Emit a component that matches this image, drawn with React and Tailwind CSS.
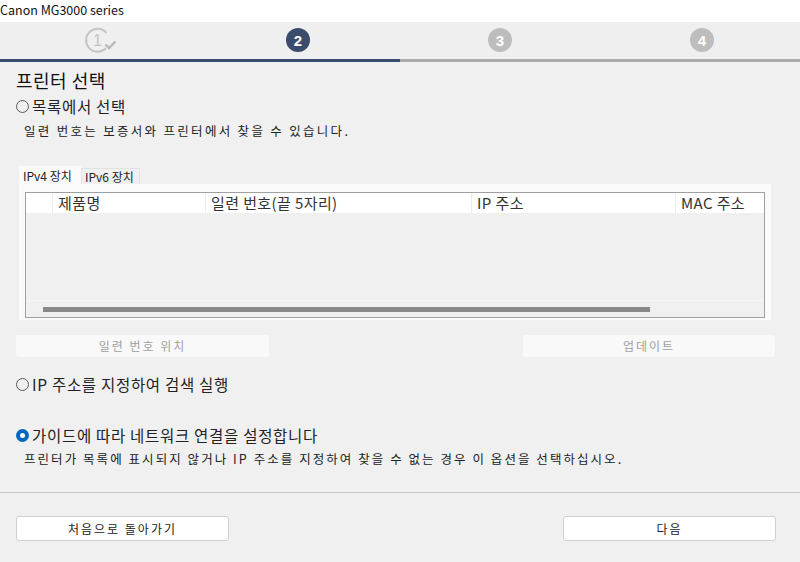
import React from 'react';

const font = { fontFamily: '"Noto Sans CJK KR", "Liberation Sans", sans-serif' };

const StepDone = () => (
  <svg width="34" height="26" viewBox="0 0 34 26">
    <path d="M23.5 17 A11.5 11.5 0 1 1 17.5 2.7" fill="none" stroke="#c4c4c4" strokeWidth="2" transform="rotate(25 12.5 13)" />
    <text x="12.5" y="19" textAnchor="middle" fontSize="16" fill="#c4c4c4" fontFamily="Liberation Sans, sans-serif">1</text>
    <path d="M20.5 17.5 L24 21 L30.5 14.5" fill="none" stroke="#b8b8b8" strokeWidth="2.4" />
  </svg>
);

const StepCircle = ({ n, active }) => (
  <div
    className={`w-6 h-6 rounded-full flex items-center justify-center text-white text-[15px] font-bold leading-none ${
      active ? 'bg-[#3a4b6b]' : 'bg-[#bdbdbd]'
    }`}
    style={{ fontFamily: '"Liberation Sans", sans-serif' }}
  >
    {n}
  </div>
);

const Radio = ({ checked }) =>
  checked ? (
    <span className="w-[13px] h-[13px] rounded-full bg-[#0067c0] flex items-center justify-center shrink-0">
      <span className="w-[5px] h-[5px] rounded-full bg-white" />
    </span>
  ) : (
    <span className="w-[13px] h-[13px] rounded-full border border-[#5c5c5c] bg-transparent shrink-0" />
  );

const RadioRow = ({ checked, label, className = '' }) => (
  <div className={`flex items-center gap-[3px] h-4 pl-4 ${className}`}>
    <Radio checked={checked} />
    <span className="text-[15.5px] text-[#222] leading-4 tracking-[0.7px] whitespace-nowrap">{label}</span>
  </div>
);

const columns = [
  { w: 'w-[26px]', label: '' },
  { w: 'w-[153px]', label: '제품명' },
  { w: 'w-[266px]', label: '일련 번호(끝 5자리)' },
  { w: 'w-[204px]', label: 'IP 주소' },
  { w: 'flex-1', label: 'MAC 주소' },
];

const App = () => {
  return (
    <div className="w-[800px] h-[562px] bg-[#f0f0f0] flex flex-col overflow-hidden" style={font}>
      {/* title bar */}
      <div className="h-[22px] bg-white text-[12.5px] leading-[20px] text-[#111] whitespace-nowrap">Canon MG3000 series</div>

      {/* steps */}
      <div className="h-[37px] bg-[#efefef] grid grid-cols-4 items-center pb-[1px]">
        <div className="flex justify-center pl-[3px]">
          <StepDone />
        </div>
        <div className="flex justify-center pr-[4px]">
          <StepCircle n="2" active />
        </div>
        <div className="flex justify-center">
          <StepCircle n="3" />
        </div>
        <div className="flex justify-center pl-[4px]">
          <StepCircle n="4" />
        </div>
      </div>
      <div className="h-[3px] flex">
        <div className="w-[400px] bg-[#3b4d6e]" />
        <div className="flex-1 bg-[#ababab]" />
      </div>

      {/* heading */}
      <div className="mt-[8px] h-5 pl-4 text-[18px] leading-5 text-[#111] tracking-[0.5px]">프린터 선택</div>

      <RadioRow className="mt-[8px]" label="목록에서 선택" />
      <div className="mt-[9px] h-4 pl-6 text-[12.5px] leading-4 text-[#222] tracking-[2.3px] whitespace-nowrap">
        일련 번호는 보증서와 프린터에서 찾을 수 있습니다.
      </div>

      {/* tabs */}
      <div className="mt-[27px] ml-[19px] h-[18px] flex items-end text-[12px] text-[#222]">
        <div className="h-[19px] w-[62px] bg-[#fafafa] flex items-center pl-[4px] relative top-[1px] whitespace-nowrap">IPv4 장치</div>
        <div className="h-[16px] w-[59px] border border-b-0 border-[#e2e2e2] flex items-center pl-[3px] whitespace-nowrap">IPv6 장치</div>
      </div>

      {/* tab panel */}
      <div className="ml-[19px] w-[752px] h-[136px] bg-[#fafafa] pt-[8px] pl-[6px]">
        <div className="w-[740px] h-[126px] border border-[#a0a0a0] bg-[#f0f0f0] flex flex-col">
          <div className="h-5 bg-white flex text-[15px] text-[#333] leading-5 tracking-[0.4px]">
            {columns.map((c, i) => (
              <div key={i} className={`${c.w} h-full pl-[5px] ${i > 0 ? 'border-l border-[#ececec]' : ''} whitespace-nowrap`}>
                {c.label}
              </div>
            ))}
          </div>
          <div className="flex-1" />
          <div className="h-[17px] border-t border-[#f5f5f5] flex items-center pl-[17px]">
            <div className="w-[607px] h-[5px] bg-[#888888]" />
          </div>
        </div>
      </div>

      {/* disabled buttons */}
      <div className="mt-[15px] h-[22px] flex justify-between pl-4 pr-[25px]">
        <div className="w-[253px] h-full bg-[#f9f9f9] rounded-[3px] flex items-center justify-center text-[12px] text-[#a0a0a0] tracking-[2px]">
          일련 번호 위치
        </div>
        <div className="w-[252px] h-full bg-[#f9f9f9] rounded-[3px] flex items-center justify-center text-[12px] text-[#a0a0a0] tracking-[2px]">
          업데이트
        </div>
      </div>

      <RadioRow className="mt-[19px]" label="IP 주소를 지정하여 검색 실행" />
      <RadioRow className="mt-[35px]" checked label="가이드에 따라 네트워크 연결을 설정합니다" />
      <div className="mt-[8px] h-4 pl-6 text-[12.5px] leading-4 text-[#222] tracking-[2.05px] whitespace-nowrap">
        프린터가 목록에 표시되지 않거나 IP 주소를 지정하여 찾을 수 없는 경우 이 옵션을 선택하십시오.
      </div>

      {/* separator */}
      <div className="mt-[25px] h-[1px] bg-[#c6c6c6]" />

      {/* bottom buttons */}
      <div className="mt-[23px] h-[25px] flex justify-between pl-4 pr-[24px]">
        <button className="w-[213px] h-full bg-white border border-[#d0d0d0] rounded-[3px] text-[12px] text-[#222] tracking-[2px]">
          처음으로 돌아가기
        </button>
        <button className="w-[213px] h-full bg-white border border-[#d0d0d0] rounded-[3px] text-[12px] text-[#222] tracking-[2px]">
          다음
        </button>
      </div>
    </div>
  );
};

export default App;
